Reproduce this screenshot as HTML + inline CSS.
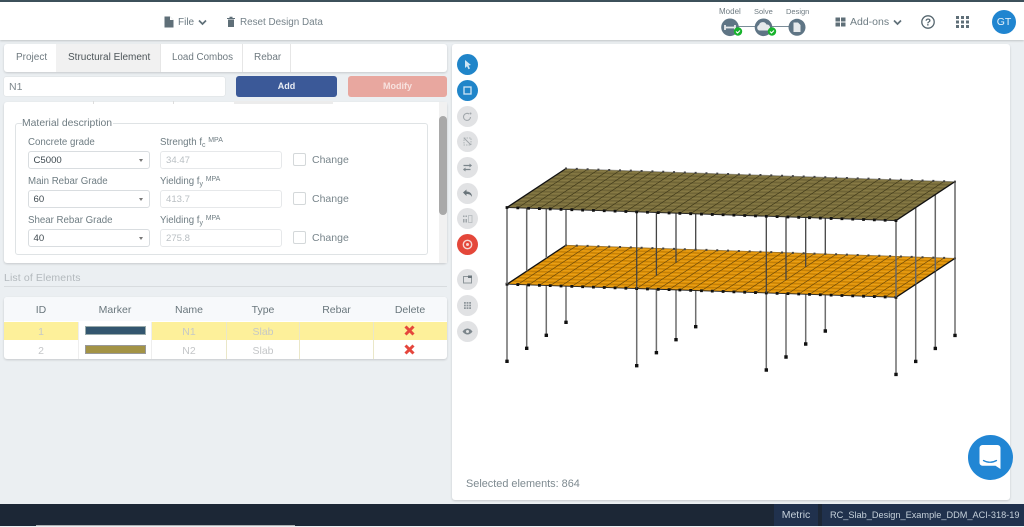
<!DOCTYPE html>
<html><head><meta charset="utf-8"><style>
html,body{margin:0;padding:0}
body{width:1024px;height:526px;position:relative;overflow:hidden;background:#ebeff2;font-family:"Liberation Sans",sans-serif;color:#6b7a82}
.a{position:absolute;white-space:nowrap}
.card{background:#fff;border-radius:3px;box-shadow:0 1px 2px rgba(0,0,0,.16)}
.lb{font-size:9.7px;color:#6f7d83}
.lb sup{font-size:7px;line-height:0;vertical-align:3px}
.lb sub{font-size:7px;line-height:0;vertical-align:-2px}
.sel{background:#fff;border:1px solid #d9dde0;border-radius:3px;width:120px;height:16px;left:28px;font-size:9.6px;color:#3f4a50;line-height:17px;text-indent:4.5px}
.sel:after{content:"";position:absolute;right:6px;top:7px;border:2.5px solid transparent;border-top:3px solid #777}
.inp{background:#fff;border:1px solid #e6e8ea;border-radius:3px;width:120px;height:16px;left:160px;font-size:9.6px;color:#b9bfc3;line-height:17px;text-indent:5px}
.cb{left:293px;width:11px;height:11px;border:1px solid #d4d8da;border-radius:2px;background:#fff}
.ch{left:312px;font-size:10.5px;color:#78858b}
.tab{font-size:10px;top:52px;color:#6f7a80}
.btn{position:absolute;left:456.5px;width:21px;height:21px;border-radius:50%;background:#e1e2e4}
.btn svg{position:absolute;left:0;top:0}
.th{top:304px;font-size:10.5px;color:#6a777d;text-align:center}
.td{font-size:10.5px;color:#c6c9c6;text-align:center}
</style></head><body>
<div class="a" style="left:0;top:0;width:1024px;height:2px;background:#3d515b"></div>
<div class="a" style="left:0;top:2px;width:1024px;height:38px;background:#fff;box-shadow:0 1px 2px rgba(0,0,0,.18)"></div>

<svg class="a" style="left:163px;top:16px" width="12" height="12" viewBox="0 0 12 12"><path d="M1.500 .5h5.500l3.500 3.500v7.500h-9z" fill="#5f6f78"/><path d="M7 .5v3.500h3.500" fill="#fff"/></svg>
<div class="a" style="left:178px;top:16.500px;font-size:10px;color:#6b7a82">File</div>
<svg class="a" style="left:198px;top:19px" width="9" height="7" viewBox="0 0 9 7"><path d="M1 1.500l3.500 3.500 3.500-3.500" fill="none" stroke="#5f6f78" stroke-width="1.700"/></svg>
<svg class="a" style="left:226px;top:16px" width="10" height="12" viewBox="0 0 10 12"><path d="M1 2h8v1H1zM3.500 .8h3V2h-3zM2 3.500h6v7.500H2z" fill="#5f6f78"/></svg>
<div class="a" style="left:240px;top:16.500px;font-size:9.900px;color:#76838a">Reset Design Data</div>

<div class="a" style="left:719px;top:7px;font-size:8px;color:#6f7b82">Model</div>
<div class="a" style="left:754px;top:7px;font-size:7.500px;color:#6f7b82">Solve</div>
<div class="a" style="left:786px;top:7px;font-size:7.500px;color:#6f7b82">Design</div>
<svg class="a" style="left:716px;top:14px" width="92" height="26" viewBox="716 14 92 26">
<path d="M730 26.500h67" stroke="#7a8c98" stroke-width="1"/>
<circle cx="730" cy="27.300" r="8.800" fill="#5f7585"/><circle cx="763.500" cy="27.300" r="8.800" fill="#5f7585"/><circle cx="797" cy="27.300" r="8.500" fill="#5f7585"/>
<g opacity=".85"><path d="M725 25v5M735 25v5" stroke="#fff" stroke-width="1.800"/><path d="M725 27.500h10" stroke="#fff" stroke-width="1.800"/>
<path d="M759 30.500a3 3 0 0 1 0-5.500a4 4 0 0 1 7.500-.5a3 3 0 0 1 1 6z" fill="#fff"/>
<path d="M793.500 22.500h4.500l2.500 2.500v7h-7z" fill="#fff"/></g>
<circle cx="738" cy="31.500" r="4.200" fill="#17b32c"/><circle cx="772" cy="31.500" r="4.200" fill="#17b32c"/>
<path d="M736 31.500l1.500 1.500 2.500-2.500M770 31.500l1.500 1.500 2.500-2.500" stroke="#fff" stroke-width="1.100" fill="none"/>
</svg>
<svg class="a" style="left:835px;top:17px" width="11" height="10" viewBox="0 0 11 10"><path d="M.5 .5h4.500v4H.5zM6 .5h4.500v4H6zM.5 5.500h4.500v4H.5zM6 5.500h4.500v4H6z" fill="#5f6f78"/></svg>
<div class="a" style="left:850px;top:16px;font-size:10.500px;color:#6f7d84">Add-ons</div>
<svg class="a" style="left:893px;top:19px" width="9" height="7" viewBox="0 0 9 7"><path d="M1 1.500l3.500 3.500 3.500-3.500" fill="none" stroke="#5f6f78" stroke-width="1.700"/></svg>
<svg class="a" style="left:920px;top:14px" width="16" height="16" viewBox="0 0 16 16"><circle cx="8" cy="8" r="6.200" fill="none" stroke="#55656e" stroke-width="1.300"/><text x="8" y="11.500" text-anchor="middle" font-size="10" font-weight="bold" fill="#55656e" font-family="Liberation Sans">?</text></svg>
<svg class="a" style="left:955px;top:15px" width="15" height="14" viewBox="0 0 15 14"><path d="M1 1h3v3H1zM6 1h3v3H6zM11 1h3v3h-3zM1 5.500h3v3H1zM6 5.500h3v3H6zM11 5.500h3v3h-3zM1 10h3v3H1zM6 10h3v3H6zM11 10h3v3h-3z" fill="#5f6f78"/></svg>
<div class="a" style="left:992px;top:10px;width:24px;height:24px;border-radius:50%;background:#2085d0;color:#e8f3fb;font-size:10.500px;line-height:24px;text-align:center">GT</div>

<div class="a card" style="left:4px;top:44px;width:443px;height:28px"></div>
<div class="a" style="left:56px;top:44px;width:104px;height:28px;background:#f1f1f1"></div>
<div class="a" style="left:160px;top:44px;width:1px;height:28px;background:#e6e6e6"></div>
<div class="a" style="left:242px;top:44px;width:1px;height:28px;background:#e6e6e6"></div>
<div class="a" style="left:290px;top:44px;width:1px;height:28px;background:#e6e6e6"></div>
<div class="a tab" style="left:16px">Project</div>
<div class="a tab" style="left:68px;color:#4d5559">Structural Element</div>
<div class="a tab" style="left:172px;font-size:9.800px">Load Combos</div>
<div class="a tab" style="left:254px">Rebar</div>

<div class="a" style="left:4px;top:77px;width:221px;height:19px;background:#fff;border-radius:2px;box-shadow:0 0 1px rgba(0,0,0,.2);font-size:10.500px;line-height:20px;text-indent:5px;color:#7d878c">N1</div>
<div class="a" style="left:236px;top:76px;width:101px;height:21px;background:#3b5998;border-radius:3px;color:#e9edf4;font-size:9px;font-weight:bold;line-height:21px;text-align:center">Add</div>
<div class="a" style="left:348px;top:76px;width:99px;height:21px;background:#e8a79f;border-radius:3px;color:#f7e2df;font-size:9px;font-weight:bold;line-height:21px;text-align:center">Modify</div>

<div class="a card" style="left:4px;top:102px;width:443px;height:161px"></div>
<div class="a" style="left:93px;top:101px;width:1px;height:3px;background:#ddd"></div>
<div class="a" style="left:173px;top:101px;width:1px;height:3px;background:#ddd"></div>
<div class="a" style="left:234px;top:101px;width:99px;height:3px;background:#ececec"></div>
<div class="a" style="left:439px;top:102px;width:8px;height:161px;background:#f1f1f1"></div>
<div class="a" style="left:439px;top:116px;width:8px;height:99px;background:#a9a9a9;border-radius:4px"></div>

<div class="a" style="left:15px;top:123px;width:411px;height:130px;border:1px solid #dfe3e5;border-radius:3px"></div>
<div class="a" style="left:22px;top:117.500px;background:#fff;font-size:10.400px;color:#6f7c82;padding-right:1px">Material description</div>

<div class="a lb" style="left:28px;top:137px">Concrete grade</div>
<div class="a lb" style="left:160px;top:137px">Strength f<sub>c</sub> <sup>MPA</sup></div>
<div class="a sel" style="top:151px">C5000</div><div class="a inp" style="top:151px">34.47</div>
<div class="a cb" style="top:153px"></div><div class="a ch" style="top:153.500px">Change</div>

<div class="a lb" style="left:28px;top:176px">Main Rebar Grade</div>
<div class="a lb" style="left:160px;top:176px">Yielding f<sub>y</sub> <sup>MPA</sup></div>
<div class="a sel" style="top:190px">60</div><div class="a inp" style="top:190px">413.7</div>
<div class="a cb" style="top:192px"></div><div class="a ch" style="top:192.500px">Change</div>

<div class="a lb" style="left:28px;top:215px">Shear Rebar Grade</div>
<div class="a lb" style="left:160px;top:215px">Yielding f<sub>y</sub> <sup>MPA</sup></div>
<div class="a sel" style="top:229px">40</div><div class="a inp" style="top:229px">275.8</div>
<div class="a cb" style="top:231px"></div><div class="a ch" style="top:231.500px">Change</div>

<div class="a" style="left:4px;top:272px;font-size:10.500px;color:#b3b9bd;letter-spacing:.12px">List of Elements</div>
<div class="a" style="left:4px;top:286px;width:443px;height:1px;background:#d8dcdf"></div>

<div class="a card" style="left:4px;top:297px;width:443px;height:62px;overflow:hidden">
 <div class="a" style="left:0;top:0;width:443px;height:24px;background:#f7f9fb"></div>
 <div class="a" style="left:0;top:25px;width:443px;height:18px;background:#fdf09a"></div>
 <div class="a" style="left:74px;top:25px;width:74px;height:37px;background:#fff;border-left:1px solid #eee;border-right:1px solid #eee;box-sizing:border-box"></div>
 <div class="a" style="left:222px;top:25px;width:1px;height:37px;background:#eae7c8"></div>
 <div class="a" style="left:295px;top:25px;width:1px;height:37px;background:#eae7c8"></div>
 <div class="a" style="left:369px;top:25px;width:1px;height:37px;background:#eae7c8"></div>
 <div class="a" style="left:81px;top:29px;width:61px;height:9px;background:#33566f;border:1px solid #9aa;box-sizing:border-box"></div>
 <div class="a" style="left:81px;top:48px;width:61px;height:9px;background:#a39345;border:1px solid #999;box-sizing:border-box"></div>
</div>
<div class="a th" style="left:4px;width:74px">ID</div>
<div class="a th" style="left:78px;width:74px">Marker</div>
<div class="a th" style="left:152px;width:74px">Name</div>
<div class="a th" style="left:226px;width:74px">Type</div>
<div class="a th" style="left:300px;width:73px">Rebar</div>
<div class="a th" style="left:373px;width:74px">Delete</div>
<div class="a td" style="left:4px;width:74px;top:326px">1</div>
<div class="a td" style="left:152px;width:74px;top:326px">N1</div>
<div class="a td" style="left:226px;width:74px;top:326px">Slab</div>
<div class="a td" style="left:4px;width:74px;top:345px;color:#c4c6c8">2</div>
<div class="a td" style="left:152px;width:74px;top:345px;color:#c4c6c8">N2</div>
<div class="a td" style="left:226px;width:74px;top:345px;color:#c4c6c8">Slab</div>
<svg class="a" style="left:404px;top:325px" width="11" height="30" viewBox="0 0 11 30"><path d="M1.500 1.500l8 8M9.500 1.500l-8 8M1.500 20.500l8 8M9.500 20.500l-8 8" stroke="#e5463c" stroke-width="3"/></svg>

<div class="a card" style="left:452px;top:44px;width:558px;height:456px"></div>
<div class="a" style="left:466px;top:477.500px;font-size:10.900px;color:#7e8a90">Selected elements: 864</div>

<div class="btn" style="top:53.500px;background:#2085c9"><svg width="21" height="21"><path d="M8 6l6 5-2.500.5 1.500 3-1.500.7-1.500-3L8 14z" fill="#cfe5f4"/></svg></div>
<div class="btn" style="top:79.500px;background:#2085c9"><svg width="21" height="21"><rect x="7" y="7" width="7" height="7" fill="none" stroke="#cfe5f4" stroke-width="1.300"/></svg></div>
<div class="btn" style="top:105.500px"><svg width="21" height="21"><path d="M12 8a3.500 3.500 0 1 0 1.500 3" fill="none" stroke="#a0a6aa" stroke-width="1.100"/><circle cx="13.500" cy="7.500" r="1" fill="#a0a6aa"/></svg></div>
<div class="btn" style="top:130.500px"><svg width="21" height="21"><rect x="7" y="7" width="7" height="7" fill="none" stroke="#b0b5b8" stroke-dasharray="1.500 1"/><path d="M7 7l7 7" stroke="#a0a6aa"/></svg></div>
<div class="btn" style="top:156.500px"><svg width="21" height="21"><path d="M6.500 8.500h7M6.500 12.500h7" stroke="#7c868c" stroke-width="1.200"/><path d="M12.500 6.500l2.500 2-2.500 2zM8.500 10.500L6 12.500l2.500 2z" fill="#7c868c"/></svg></div>
<div class="btn" style="top:182.500px"><svg width="21" height="21"><path d="M6 9.500l3.500-3v2c3.500 0 5.500 2 5.500 5.500-1-2-2.500-3-5.500-3v2z" fill="#6a757b"/></svg></div>
<div class="btn" style="top:207.500px"><svg width="21" height="21"><path d="M6 7.500h1.500V9H6zM8.500 7.500H10V9H8.500zM6 11h1.500v3.500H6zM8.500 11H10v3.500H8.500z" fill="#a0a6aa"/><rect x="11.500" y="7.500" width="3.500" height="7" fill="none" stroke="#b4b9bc" stroke-width=".8"/></svg></div>
<div class="btn" style="top:233.500px;background:#e4473a"><svg width="21" height="21"><circle cx="10.500" cy="10.500" r="4.200" fill="none" stroke="#f7d5d1" stroke-width="1.400"/><circle cx="10.500" cy="10.500" r="1.500" fill="#f7d5d1"/></svg></div>
<div class="btn" style="top:268.500px"><svg width="21" height="21"><rect x="6.500" y="7.500" width="8" height="6.500" fill="none" stroke="#8d959a"/><rect x="11" y="6.500" width="4" height="2.500" fill="#6a757b"/></svg></div>
<div class="btn" style="top:294.500px"><svg width="21" height="21"><path d="M7 7h1.800v1.800H7zM9.600 7h1.800v1.800H9.600zM12.200 7H14v1.800h-1.800zM7 9.600h1.800v1.800H7zM9.600 9.600h1.800v1.800H9.600zM12.200 9.600H14v1.800h-1.800zM7 12.200h1.800V14H7zM9.600 12.200h1.800V14H9.600zM12.200 12.200H14V14h-1.800z" fill="#8d959a"/></svg></div>
<div class="btn" style="top:320.500px"><svg width="21" height="21"><path d="M5.500 10.500c3-4 7-4 10 0-3 4-7 4-10 0z" fill="#7c868c"/><circle cx="10.500" cy="10.500" r="1.500" fill="#e1e2e4"/></svg></div>

<svg class="a" style="left:452px;top:44px" width="558" height="456" viewBox="452 44 558 456">
<defs>
<pattern id="po" patternUnits="userSpaceOnUse" width="1" height="1" patternTransform="matrix(10.806 .364 4.917 -3.25 507 284.200)">
 <rect width="1" height="1" fill="#de9005"/>
 <path d="M0 .5H1" stroke="#eda722" stroke-width=".2"/>
 <path d="M0 0H1M0 1H1" stroke="#a56c08" stroke-width=".14"/>
 <path d="M0 0V1M1 0V1" stroke="#6b4808" stroke-width=".11"/>
</pattern>
<pattern id="pt" patternUnits="userSpaceOnUse" width="1" height="1" patternTransform="matrix(10.806 .364 4.917 -3.25 507 207.500)">
 <rect width="1" height="1" fill="#7a6e3c"/>
 <path d="M0 .5H1" stroke="#8d8049" stroke-width=".2"/>
 <path d="M0 0H1M0 1H1" stroke="#625830" stroke-width=".14"/>
 <path d="M0 0V1M1 0V1" stroke="#3f3919" stroke-width=".11"/>
</pattern>
</defs>
<path transform="translate(0 76.700)" fill="none" stroke="#6e6e6e" stroke-width="1.500" d="M507 207.500v77M636.700 211.900v77M766.300 216.200v77M896 220.600v77M526.700 194.500v77M656.400 198.900v77M786 203.200v77M915.700 207.600v77M546.300 181.500v77M676 185.900v77M805.700 190.200v77M935.300 194.600v77M566 168.500v77M695.700 172.900v77M825.300 177.200v77M955 181.600v77"/>
<polygon points="507,284.200 566,245.200 955,258.300 896,297.300" fill="url(#po)"/>
<path d="M507 284.200L566 245.200M955 258.300L896 297.300" stroke="#111" stroke-width="1.300"/>
<path d="M507 284.200L896 297.300" stroke="#222" stroke-width=".9"/>
<path d="M566 245.200L955 258.300" stroke="#8a6a30" stroke-width=".6"/>
<path d="M507 284.200L896 297.300" fill="none" stroke="#111" stroke-width="2.800" stroke-linecap="square" stroke-dasharray="0 10.810"/>
<path d="M566 245.200L955 258.300" fill="none" stroke="#444" stroke-width="2" stroke-linecap="square" stroke-dasharray="0 10.810"/>
<path fill="none" stroke="#666" stroke-width="1.500" d="M507 207.500v76.700M526.700 194.500v76.700M546.300 181.500v76.700M566 168.500v76.700M896 220.600v76.700M915.700 207.600v76.700M935.300 194.600v76.700M955 181.600v76.700"/>
<path fill="none" stroke="#444" stroke-width="1.300" d="M636.700 211.900v76.700M766.300 216.200v76.700M656.400 198.900v76.700M786 203.200v76.700M676 185.900v76.700M805.700 190.200v76.700M695.700 172.900v76.700M825.300 177.200v76.700"/>
<polygon points="507,207.500 566,168.500 955,181.600 896,220.600" fill="url(#pt)"/>
<path d="M507 207.500L566 168.500M955 181.600L896 220.600" stroke="#111" stroke-width="1.300"/>
<path d="M507 207.500L896 220.600" stroke="#222" stroke-width=".9"/>
<path d="M566 168.500L955 181.600" stroke="#999" stroke-width=".6"/>
<path d="M507 207.500L896 220.600" fill="none" stroke="#111" stroke-width="2.800" stroke-linecap="square" stroke-dasharray="0 10.810"/>
<path d="M566 168.500L955 181.600" fill="none" stroke="#444" stroke-width="2" stroke-linecap="square" stroke-dasharray="0 10.810"/>
<path transform="translate(0 153.800)" fill="none" stroke="#111" stroke-width="3.400" stroke-linecap="square" d="M507 207.500h.01M636.700 211.900h.01M766.300 216.200h.01M896 220.600h.01M526.700 194.500h.01M656.400 198.900h.01M786 203.200h.01M915.700 207.600h.01M546.300 181.500h.01M676 185.900h.01M805.700 190.200h.01M935.300 194.600h.01M566 168.500h.01M695.700 172.900h.01M825.300 177.200h.01M955 181.600h.01"/>
</svg>

<div class="a" style="left:967.500px;top:434.500px;width:45px;height:45px;border-radius:50%;background:#2186d4"></div>
<svg class="a" style="left:978px;top:445px" width="24" height="24" viewBox="0 0 24 24"><path d="M4.500 0h15a3 3 0 0 1 3 3v21l-5-3.300H4.500a3 3 0 0 1-3-3V3a3 3 0 0 1 3-3z" fill="#fff"/><path d="M5.500 15.500c4 2.300 9 2.300 13 0" fill="none" stroke="#2186d4" stroke-width="1.300" stroke-linecap="round"/></svg>

<div class="a" style="left:0;top:504px;width:1024px;height:22px;background:#1c2736"></div>
<div class="a" style="left:774px;top:504px;width:44px;height:22px;background:#20314d;color:#c5d0da;font-size:10.500px;line-height:23px;text-align:center">Metric</div>
<div class="a" style="left:822px;top:504px;width:202px;height:22px;background:#20314d;color:#c5d0da;font-size:9.200px;line-height:23px;padding-left:8px;box-sizing:border-box;overflow:hidden">RC_Slab_Design_Example_DDM_ACI-318-19</div>
<div class="a" style="left:36px;top:525px;width:259px;height:1px;background:#aeb1b4"></div>
</body></html>
